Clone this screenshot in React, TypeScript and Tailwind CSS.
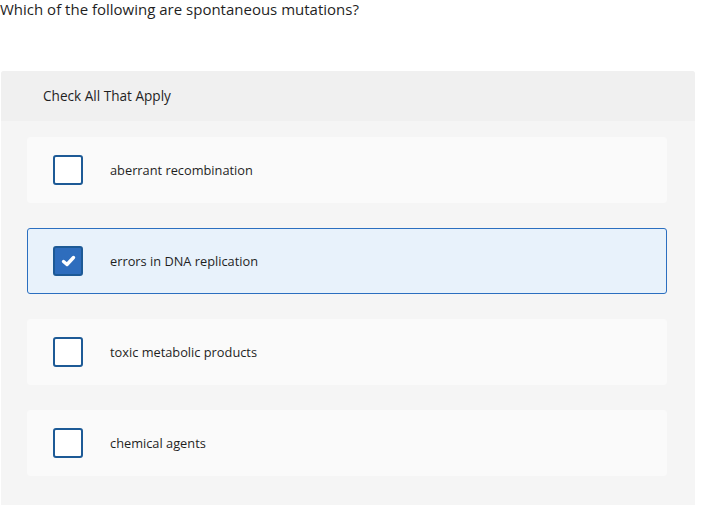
import React from "react";

const options = [
  { label: "aberrant recombination", checked: false },
  { label: "errors in DNA replication", checked: true },
  { label: "toxic metabolic products", checked: false },
  { label: "chemical agents", checked: false },
];

function Box({ checked }: { checked: boolean }) {
  if (checked) {
    return (
      <div className="w-[30px] h-[30px] rounded-[3px] border-2 border-[#1d5a96] bg-[#2e6dbd] flex items-center justify-center shrink-0">
        <svg width="15" height="12" viewBox="0 0 15 12">
          <path d="M2.5 6.5 L6 9.5 L12.5 2.5" fill="none" stroke="#fff" strokeWidth="3.4" strokeLinecap="round" strokeLinejoin="round" />
        </svg>
      </div>
    );
  }
  return <div className="w-[30px] h-[30px] rounded-[3px] border-2 border-[#1d5a96] bg-white shrink-0" />;
}

export default function App() {
  return (
    <div className="w-[702px] h-[505px] overflow-hidden bg-white text-[#1f1f1f]" style={{ fontFamily: '"Open Sans", sans-serif' }}>
      <div className="text-[15px] leading-[19px] h-[71px]">Which of the following are spontaneous mutations?</div>
      <div className="ml-[1px] w-[694px] rounded-t-[3px] bg-[#f5f5f5] pb-[40px]">
        <div className="h-[50px] bg-[#f0f0f0] rounded-t-[3px] flex items-center pl-[42px] text-[13.6px] pt-[1px]">Check All That Apply</div>
        <div className="pl-[26px] pr-[28px] pt-[16px] flex flex-col gap-[25px]">
          {options.map((o) => (
            <div
              key={o.label}
              className={
                "h-[66px] rounded-[3px] flex items-center pl-[25px] " +
                (o.checked ? "bg-[#e8f2fb] border border-[#2b6fc0]" : "bg-[#fafafa] border border-[#fafafa]")
              }
            >
              <Box checked={o.checked} />
              <span className="ml-[27px] text-[12.8px] pt-[1px]">{o.label}</span>
            </div>
          ))}
        </div>
      </div>
    </div>
  );
}
